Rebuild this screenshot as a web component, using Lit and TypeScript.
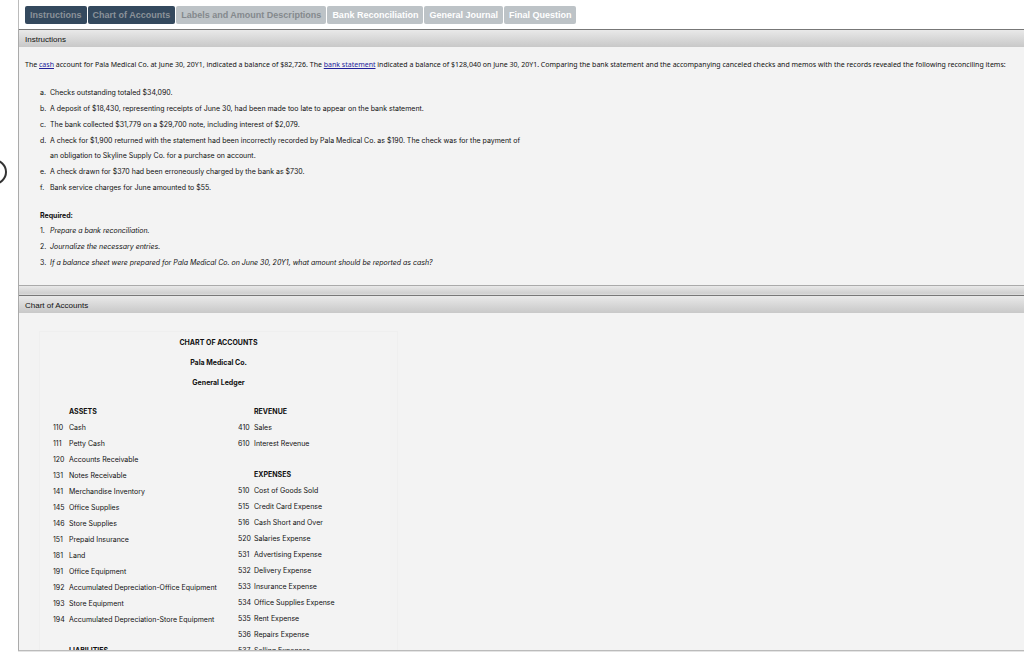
import { LitElement, html, css, nothing } from "lit";
import { customElement, property, state } from "lit/decorators.js";

type Account = [number: string, name: string];
interface Group {
  title: string;
  accounts: Account[];
}
interface Tab {
  label: string;
  tone: "open" | "visited" | "plain";
}

const TABS: Tab[] = [
  { label: "Instructions", tone: "open" },
  { label: "Chart of Accounts", tone: "open" },
  { label: "Labels and Amount Descriptions", tone: "visited" },
  { label: "Bank Reconciliation", tone: "plain" },
  { label: "General Journal", tone: "plain" },
  { label: "Final Question", tone: "plain" },
];

const ITEMS = [
  "Checks outstanding totaled $34,090.",
  "A deposit of $18,430, representing receipts of June 30, had been made too late to appear on the bank statement.",
  "The bank collected $31,779 on a $29,700 note, including interest of $2,079.",
  "A check for $1,900 returned with the statement had been incorrectly recorded by Pala Medical Co. as $190. The check was for the payment of an obligation to Skyline Supply Co. for a purchase on account.",
  "A check drawn for $370 had been erroneously charged by the bank as $730.",
  "Bank service charges for June amounted to $55.",
];

const REQUIRED = [
  "Prepare a bank reconciliation.",
  "Journalize the necessary entries.",
  "If a balance sheet were prepared for Pala Medical Co. on June 30, 20Y1, what amount should be reported as cash?",
];

const LEFT: Group[] = [
  {
    title: "ASSETS",
    accounts: [
      ["110", "Cash"],
      ["111", "Petty Cash"],
      ["120", "Accounts Receivable"],
      ["131", "Notes Receivable"],
      ["141", "Merchandise Inventory"],
      ["145", "Office Supplies"],
      ["146", "Store Supplies"],
      ["151", "Prepaid Insurance"],
      ["181", "Land"],
      ["191", "Office Equipment"],
      ["192", "Accumulated Depreciation-Office Equipment"],
      ["193", "Store Equipment"],
      ["194", "Accumulated Depreciation-Store Equipment"],
    ],
  },
  { title: "LIABILITIES", accounts: [] },
];

const RIGHT: Group[] = [
  {
    title: "REVENUE",
    accounts: [
      ["410", "Sales"],
      ["610", "Interest Revenue"],
    ],
  },
  {
    title: "EXPENSES",
    accounts: [
      ["510", "Cost of Goods Sold"],
      ["515", "Credit Card Expense"],
      ["516", "Cash Short and Over"],
      ["520", "Salaries Expense"],
      ["531", "Advertising Expense"],
      ["532", "Delivery Expense"],
      ["533", "Insurance Expense"],
      ["534", "Office Supplies Expense"],
      ["535", "Rent Expense"],
      ["536", "Repairs Expense"],
      ["537", "Selling Expenses"],
    ],
  },
];

@customElement("work-panel")
class WorkPanel extends LitElement {
  @property() heading = "";

  static styles = css`
    :host {
      display: block;
      border-top: 1px solid #777;
    }
    .heading {
      margin: 0;
      padding: 2px 6px 0;
      font-size: 8px;
      font-weight: 400;
      line-height: 15px;
      background: linear-gradient(#e9e9e9, #c8c8c8);
    }
  `;

  render() {
    return html`<h2 class="heading">${this.heading}</h2>
      <slot></slot>`;
  }
}

@customElement("account-table")
class AccountTable extends LitElement {
  @property({ attribute: false }) groups: Group[] = [];

  static styles = css`
    :host {
      display: block;
    }
    .table {
      border-collapse: collapse;
    }
    .group + .group::before {
      content: "";
      display: table-row;
      height: 15px;
    }
    .cell {
      height: 16px;
      padding: 0;
      line-height: 16px;
      text-align: left;
      white-space: nowrap;
      font-weight: 400;
    }
    .number {
      width: 16px;
      min-width: 16px;
    }
    .title {
      font-weight: 700;
    }
  `;

  render() {
    return html`<table class="table">
      ${this.groups.map(
        (g) => html`<tbody class="group">
          <tr>
            <td class="cell number"></td>
            <th class="cell title" scope="rowgroup">${g.title}</th>
          </tr>
          ${g.accounts.map(
            ([number, name]) => html`<tr>
              <td class="cell number">${number}</td>
              <td class="cell">${name}</td>
            </tr>`
          )}
        </tbody>`
      )}
    </table>`;
  }
}

@customElement("app-root")
class AppRoot extends LitElement {
  @state() private current = "Instructions";

  static styles = css`
    :host {
      display: flex;
      flex-direction: column;
      box-sizing: border-box;
      height: 100vh;
      padding: 0 0 5px 18px;
      position: relative;
      overflow: hidden;
      background: #fff;
      color: #111;
      font: 8px / 16px "Liberation Sans", Arial, sans-serif;
    }
    .collapse {
      position: absolute;
      top: 159px;
      left: -20px;
      width: 27px;
      height: 26px;
      padding: 0;
      border: 2px solid #333;
      border-radius: 50%;
      background: #fff;
    }
    .tabs {
      display: flex;
      flex: none;
      gap: 1px;
      padding: 6px 6px 5px;
      border-left: 1px solid #bbb;
    }
    .tab {
      height: 18px;
      padding: 0 5px;
      border: 0;
      border-radius: 2px;
      font: 700 9px / 18px "Liberation Sans", Arial, sans-serif;
      white-space: nowrap;
      background: #bdc3c7;
      color: #fff;
    }
    .visited {
      color: #84898d;
    }
    .open {
      background: #34495e;
      color: #8b9299;
    }
    .work {
      flex: 1;
      min-height: 0;
      overflow: hidden;
      border-left: 1px solid #aaa;
      border-bottom: 1px solid #bbb;
      background: #f3f3f3;
      box-shadow: 0 1px 0 #e4e4e4;
    }
    .body {
      font-family: Inter, "Liberation Sans", Arial, sans-serif;
      font-size: 7px;
    }
    .instructions {
      padding: 10px 0 14px 6px;
    }
    .intro {
      margin: 0 0 12px;
      font-family: "Noto Sans", "Liberation Sans", Arial, sans-serif;
    }
    .link {
      color: #22229a;
    }
    .list {
      margin: 0 0 0 15px;
      padding: 0;
      list-style: none;
      max-width: 484px;
      line-height: 15px;
    }
    .item {
      display: grid;
      grid-template-columns: 10px 1fr;
      padding-bottom: 1px;
    }
    .required {
      margin: 12px 0 0 15px;
      font-size: 7px;
      line-height: 15px;
    }
    .splitter {
      height: 9px;
      border-top: 1px solid #aaa;
      background: linear-gradient(#e8e8e8, #cfcfcf 80%, #dedede);
    }
    .ledger {
      width: 359px;
      box-sizing: border-box;
      margin: 18px 0 0 20px;
      padding: 1px 13px 0;
      border: 1px solid #efefef;
    }
    .title {
      margin: 0;
      text-align: center;
      font-size: 7px;
      line-height: 20px;
    }
    .columns {
      display: grid;
      grid-template-columns: 185px 1fr;
      margin-top: 11px;
    }
  `;

  render() {
    return html`
      <nav class="tabs" aria-label="Sections">
        ${TABS.map(
          (t) => html`<button
            class="tab ${t.tone}"
            aria-current=${t.label === this.current ? "page" : nothing}
            @click=${() => (this.current = t.label)}
          >${t.label}</button>`
        )}
      </nav>
      <main class="work">
        <work-panel heading="Instructions">
          <div class="body instructions">
            <p class="intro">The <a class="link" href="#cash">cash</a> account for Pala Medical Co. at June 30, 20Y1, indicated a balance of $82,726. The <a class="link" href="#bank-statement">bank statement</a> indicated a balance of $128,040 on June 30, 20Y1. Comparing the bank statement and the accompanying canceled checks and memos with the records revealed the following reconciling items:</p>
            <ol class="list">
              ${ITEMS.map(
                (text, i) => html`<li class="item"><span>${"abcdef"[i]}.</span><span>${text}</span></li>`
              )}
            </ol>
            <h3 class="required">Required:</h3>
            <ol class="list">
              ${REQUIRED.map(
                (text, i) => html`<li class="item"><span>${i + 1}.</span><em>${text}</em></li>`
              )}
            </ol>
          </div>
        </work-panel>
        <div class="splitter" role="separator"></div>
        <work-panel heading="Chart of Accounts">
          <div class="body ledger">
            <h3 class="title">CHART OF ACCOUNTS</h3>
            <h3 class="title">Pala Medical Co.</h3>
            <h3 class="title">General Ledger</h3>
            <div class="columns">
              <account-table .groups=${LEFT}></account-table>
              <account-table .groups=${RIGHT}></account-table>
            </div>
          </div>
        </work-panel>
      </main>
      <button class="collapse" aria-label="Previous"></button>
    `;
  }
}
